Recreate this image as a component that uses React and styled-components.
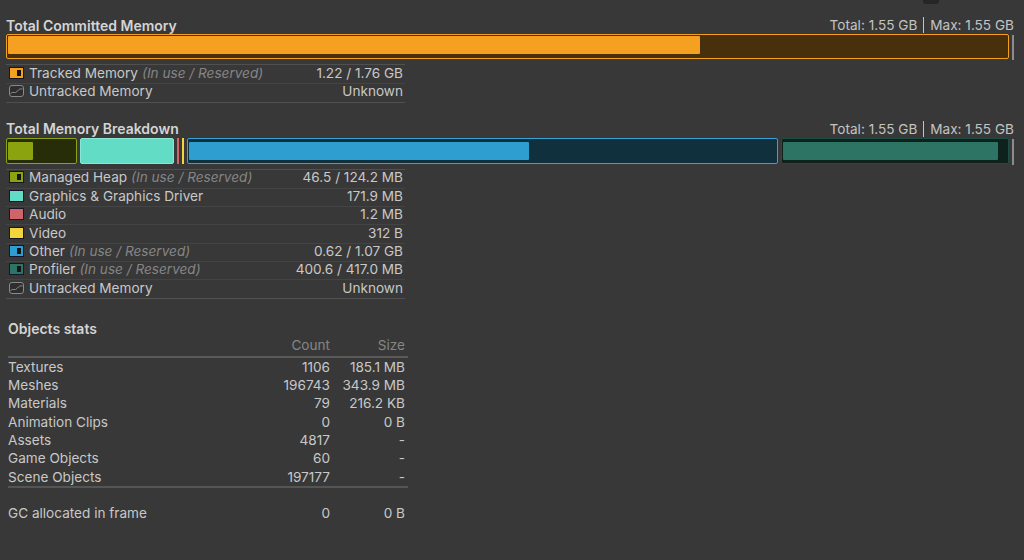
import React from "react";
import styled, { createGlobalStyle } from "styled-components";

const GlobalStyle = createGlobalStyle`
  html, body {
    margin: 0;
    padding: 0;
    background: #383838;
  }
  body {
    font-family: Inter, "Noto Sans", sans-serif;
    font-size: 13.6px;
    color: #c8c8c8;
  }
`;

const Page = styled.div`
  position: relative;
  width: 1024px;
  height: 560px;
  overflow: hidden;
  padding: 16px 10px 0 6px;
  box-sizing: border-box;
`;

const TopNub = styled.div`
  position: absolute;
  top: -6px;
  left: 923px;
  width: 16px;
  height: 10px;
  border-radius: 3px;
  background: #262626;
`;

const Section = styled.section`
  margin-bottom: ${(p) => p.$gap || 0}px;
`;

const Header = styled.div`
  display: flex;
  justify-content: space-between;
  align-items: center;
  height: 18px;
`;

const Title = styled.div`
  font-size: 14px;
  font-weight: 600;
  color: #d4d4d4;
`;

const Totals = styled.div`
  display: flex;
  align-items: center;
  color: #c4c4c4;
`;

const Divider = styled.span`
  display: inline-block;
  width: 1px;
  height: 16px;
  margin: 0 6px;
  background: #c4c4c4;
`;

const BarRow = styled.div`
  display: flex;
  align-items: stretch;
  gap: 3px;
  height: ${(p) => p.$h}px;
`;

const Track = styled.div`
  flex: 1;
  display: flex;
  gap: 3px;
`;

const MaxMarker = styled.div`
  width: 2px;
  margin: 1px 0 -1px;
  background: #8c8c8c;
`;

const Segment = styled.div`
  flex: ${(p) => p.$grow} 1 0;
  box-sizing: border-box;
  border: 1px solid ${(p) => p.$border};
  background: ${(p) => p.$bg};
  border-radius: 2px;
  padding: ${(p) => p.$pad || 0};
`;

const Sliver = styled.div`
  width: 2px;
  background: ${(p) => p.$color};
`;

const Fill = styled.div`
  height: 100%;
  background: ${(p) => p.$color};
  border-radius: 1px;
`;

const Legend = styled.div`
  width: 399px;
  margin-top: 5px;
  border-top: 1px solid #505050;
  border-bottom: 1px solid #505050;
`;

const LegendRow = styled.div`
  display: flex;
  align-items: center;
  height: 18.3px;
  box-sizing: border-box;
  padding: 0 2px 3px 3px;
  & + & {
    border-top: 1px solid #444444;
  }
`;

const Swatch = styled.div`
  position: relative;
  width: 15px;
  height: 12px;
  box-sizing: border-box;
  border: 1px solid #16162a;
  background: ${(p) => p.$color};
  margin-right: 5px;
  flex-shrink: 0;
`;

const Reserved = styled.div`
  position: absolute;
  top: 1px;
  bottom: 1px;
  right: 1px;
  width: 6px;
  background: #151515;
`;

const Label = styled.span`
  flex: 1;
  white-space: nowrap;
`;

const Hint = styled.i`
  color: #858585;
  margin-left: 4px;
`;

const Value = styled.span`
  white-space: nowrap;
`;

const Table = styled.div`
  width: 400px;
  margin-left: 2px;
`;

const TableRow = styled.div`
  display: flex;
  align-items: center;
  height: ${(p) => p.$h || 18.3}px;
  box-sizing: border-box;
  padding-bottom: ${(p) => p.$lift || 0}px;
  color: ${(p) => (p.$muted ? "#858585" : "#c8c8c8")};
  & + & {
    border-top: ${(p) => (p.$rule ? "1px solid #444444" : "none")};
  }
`;

const Name = styled.span`
  flex: 1;
`;

const Count = styled.span`
  width: 100px;
  text-align: right;
`;

const Size = styled.span`
  width: 75px;
  text-align: right;
  padding-right: 3px;
`;

const Rows = styled.div`
  border-top: 2px solid #5a5a5a;
  border-bottom: 2px solid #555555;
`;

const UntrackedIcon = () => (
  <svg width="15" height="12" viewBox="0 0 15 12" style={{ marginRight: 5, flexShrink: 0 }}>
    <rect x="0.5" y="0.5" width="14" height="11" rx="2.5" fill="#2e2e2e" stroke="#8a8a8a" />
    <path d="M1.5 8.5 C4 6, 6 9, 8 6.5 S11.5 3.5, 13.5 4" fill="none" stroke="#8a8a8a" strokeWidth="1" />
  </svg>
);

const SplitSwatch = ({ color }) => (
  <Swatch $color={color}>
    <Reserved style={{ boxShadow: `inset 0 0 0 1px ${color}` }} />
  </Swatch>
);

const breakdown = [
  { label: "Managed Heap", hint: true, value: "46.5 / 124.2 MB", color: "#8aa30e", split: true },
  { label: "Graphics & Graphics Driver", value: "171.9 MB", color: "#62dcc4" },
  { label: "Audio", value: "1.2 MB", color: "#d06468" },
  { label: "Video", value: "312 B", color: "#f2d43c" },
  { label: "Other", hint: true, value: "0.62 / 1.07 GB", color: "#2e9ed0", split: true },
  { label: "Profiler", hint: true, value: "400.6 / 417.0 MB", color: "#2d7464", split: true },
];

const objects = [
  ["Textures", "1106", "185.1 MB"],
  ["Meshes", "196743", "343.9 MB"],
  ["Materials", "79", "216.2 KB"],
  ["Animation Clips", "0", "0 B"],
  ["Assets", "4817", "-"],
  ["Game Objects", "60", "-"],
  ["Scene Objects", "197177", "-"],
];

const TotalsLine = () => (
  <Totals>
    Total: 1.55 GB
    <Divider />
    Max: 1.55 GB
  </Totals>
);

export default function App() {
  return (
    <>
      <GlobalStyle />
      <Page>
        <TopNub />
        <Section $gap={17}>
          <Header>
            <Title>Total Committed Memory</Title>
            <TotalsLine />
          </Header>
          <BarRow $h={25}>
            <Track>
              <Segment $grow={1} $border="#f2a01e" $bg="#47300b" $pad="1px 1px 4px">
                <Fill $color="#f5a020" style={{ width: `${(1.22 / 1.76) * 100}%` }} />
              </Segment>
            </Track>
            <MaxMarker />
          </BarRow>
          <Legend>
            <LegendRow>
              <SplitSwatch color="#f5a020" />
              <Label>
                Tracked Memory<Hint>(In use / Reserved)</Hint>
              </Label>
              <Value>1.22 / 1.76 GB</Value>
            </LegendRow>
            <LegendRow>
              <UntrackedIcon />
              <Label>Untracked Memory</Label>
              <Value>Unknown</Value>
            </LegendRow>
          </Legend>
        </Section>

        <Section $gap={21}>
          <Header>
            <Title>Total Memory Breakdown</Title>
            <TotalsLine />
          </Header>
          <BarRow $h={26}>
            <Track>
              <Segment $grow={68} $border="#8aa30e" $bg="#272d08" $pad="3px 1px 3px">
                <Fill $color="#8aa30e" style={{ width: `${(46.5 / 124.2) * 100}%` }} />
              </Segment>
              <Segment $grow={94} $border="#86e8d4" $bg="#62dcc4" />
              <Sliver $color="#d06468" />
              <Sliver $color="#f2d43c" />
              <Segment $grow={596} $border="#3aa2d2" $bg="#11303d" $pad="3px 1px 3px">
                <Fill $color="#2e9ed0" style={{ width: `${(0.62 / 1.07) * 100}%` }} />
              </Segment>
              <Segment $grow={228} $border="#1f4d44" $bg="#0f211d" $pad="3px 1px 3px">
                <Fill $color="#2d7464" style={{ width: `${(400.6 / 417.0) * 100}%` }} />
              </Segment>
            </Track>
            <MaxMarker />
          </BarRow>
          <Legend>
            {breakdown.map((b) => (
              <LegendRow key={b.label}>
                {b.split ? <SplitSwatch color={b.color} /> : <Swatch $color={b.color} />}
                <Label>
                  {b.label}
                  {b.hint && <Hint>(In use / Reserved)</Hint>}
                </Label>
                <Value>{b.value}</Value>
              </LegendRow>
            ))}
            <LegendRow>
              <UntrackedIcon />
              <Label>Untracked Memory</Label>
              <Value>Unknown</Value>
            </LegendRow>
          </Legend>
        </Section>

        <Table>
          <Title>Objects stats</Title>
          <TableRow $muted $h={19} $lift={3}>
            <Name />
            <Count>Count</Count>
            <Size>Size</Size>
          </TableRow>
          <Rows>
            {objects.map(([n, c, s]) => (
              <TableRow key={n} $rule>
                <Name>{n}</Name>
                <Count>{c}</Count>
                <Size>{s}</Size>
              </TableRow>
            ))}
          </Rows>
          <TableRow $h={18} style={{ marginTop: 16 }}>
            <Name>GC allocated in frame</Name>
            <Count>0</Count>
            <Size>0 B</Size>
          </TableRow>
        </Table>
      </Page>
    </>
  );
}
